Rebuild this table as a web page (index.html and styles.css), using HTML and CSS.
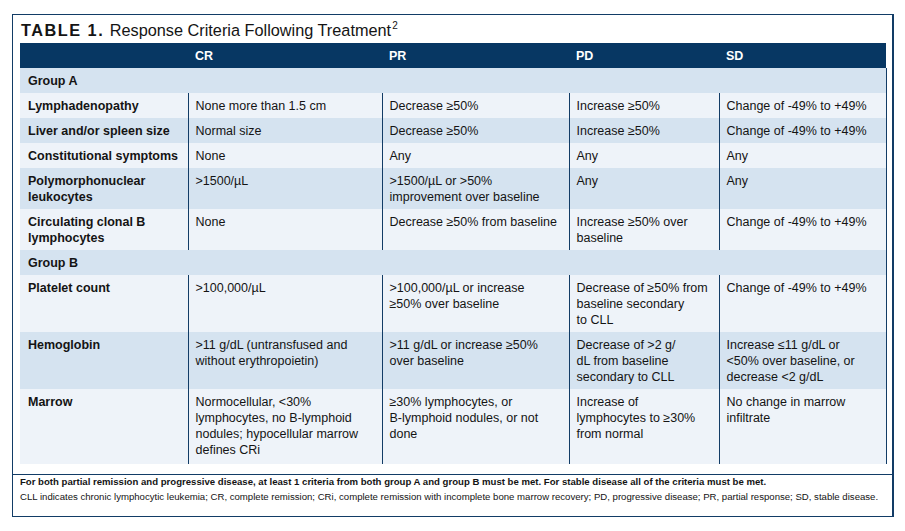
FILE: index.html
```html
<!DOCTYPE html>
<html>
<head>
<meta charset="utf-8">
<link rel="stylesheet" href="styles.css">
</head>
<body>
<div class="box">
  <h1 class="title"><span class="label">TABLE 1.</span> Response Criteria Following Treatment<sup>2</sup></h1>
  <table class="grid">
    <colgroup>
      <col class="c1"><col class="c2"><col class="c3"><col class="c4"><col class="c5">
    </colgroup>
    <thead>
      <tr><th></th><th>CR</th><th>PR</th><th>PD</th><th>SD</th></tr>
    </thead>
    <tbody>
      <tr class="group"><td colspan="5">Group A</td></tr>
      <tr class="light"><td>Lymphadenopathy</td><td>None more than 1.5 cm</td><td>Decrease ≥50%</td><td>Increase ≥50%</td><td>Change of -49% to +49%</td></tr>
      <tr class="dark"><td>Liver and/or spleen size</td><td>Normal size</td><td>Decrease ≥50%</td><td>Increase ≥50%</td><td>Change of -49% to +49%</td></tr>
      <tr class="light"><td>Constitutional symptoms</td><td>None</td><td>Any</td><td>Any</td><td>Any</td></tr>
      <tr class="dark"><td>Polymorphonuclear<br>leukocytes</td><td>&gt;1500/µL</td><td>&gt;1500/µL or &gt;50%<br>improvement over baseline</td><td>Any</td><td>Any</td></tr>
      <tr class="light"><td>Circulating clonal B<br>lymphocytes</td><td>None</td><td>Decrease ≥50% from baseline</td><td>Increase ≥50% over<br>baseline</td><td>Change of -49% to +49%</td></tr>
      <tr class="group"><td colspan="5">Group B</td></tr>
      <tr class="light"><td>Platelet count</td><td>&gt;100,000/µL</td><td>&gt;100,000/µL or increase<br>≥50% over baseline</td><td>Decrease of ≥50% from<br>baseline secondary<br>to CLL</td><td>Change of -49% to +49%</td></tr>
      <tr class="dark"><td>Hemoglobin</td><td>&gt;11 g/dL (untransfused and<br>without erythropoietin)</td><td>&gt;11 g/dL or increase ≥50%<br>over baseline</td><td>Decrease of &gt;2 g/<br>dL from baseline<br>secondary to CLL</td><td>Increase ≤11 g/dL or<br>&lt;50% over baseline, or<br>decrease &lt;2 g/dL</td></tr>
      <tr class="light tall"><td>Marrow</td><td>Normocellular, &lt;30%<br>lymphocytes, no B-lymphoid<br>nodules; hypocellular marrow<br>defines CRi</td><td>≥30% lymphocytes, or<br>B-lymphoid nodules, or not<br>done</td><td>Increase of<br>lymphocytes to ≥30%<br>from normal</td><td>No change in marrow<br>infiltrate</td></tr>
    </tbody>
  </table>
  <div class="notes">
    <p class="note-strong">For both partial remission and progressive disease, at least 1 criteria from both group A and group B must be met. For stable disease all of the criteria must be met.</p>
    <p class="note">CLL indicates chronic lymphocytic leukemia; CR, complete remission; CRi, complete remission with incomplete bone marrow recovery; PD, progressive disease; PR, partial response; SD, stable disease.</p>
  </div>
</div>
</body>
</html>
```
FILE: styles.css
```css
html, body {
  margin: 0;
  padding: 0;
  background: #ffffff;
}
body {
  font-family: "Liberation Sans", Arial, sans-serif;
  color: #141414;
}
.box {
  margin: 14px 0 0 12px;
  width: 879px;
  height: 501px;
  border: 1px solid #123c66;
  border-right-width: 2px;
  display: flex;
  flex-direction: column;
  overflow: hidden;
}
.title {
  margin: 0;
  padding: 5px 0 0 8px;
  height: 23px;
  font-size: 16.3px;
  font-weight: normal;
  line-height: 20px;
  color: #141414;
  white-space: nowrap;
}
.title .label {
  font-weight: bold;
  letter-spacing: 1.5px;
  margin-right: 1px;
}
.title sup {
  font-size: 10px;
  line-height: 0;
  vertical-align: 7px;
  margin-left: 1px;
}
.grid {
  margin-left: 7px;
  width: 866px;
  table-layout: fixed;
  border-collapse: collapse;
  font-size: 12.5px;
  line-height: 16px;
}
.c1 { width: 168px; }
.c2 { width: 194px; }
.c3 { width: 187px; }
.c4 { width: 150px; }
.c5 { width: 167px; }
.grid th {
  background: #073763;
  color: #ffffff;
  text-align: left;
  font-weight: bold;
  height: 25px;
  padding: 0 7px;
  box-sizing: border-box;
}
.grid td {
  vertical-align: top;
  padding: 5px 7px 4px 7px;
  white-space: nowrap;
  border-left: 1px solid #123c66;
}
.grid td:first-child {
  border-left: none;
  padding-left: 8px;
  font-weight: bold;
}
.grid td:last-child {
  border-right: 1px solid #123c66;
}
.grid tr.group td {
  background: #d5e3f0;
  font-weight: bold;
  border-right: 1px solid #123c66;
}
.grid tr.light td { background: #eef3f9; }
.grid tr.dark td { background: #d5e3f0; }
.grid tr.tall td { padding-bottom: 6px; }
.notes {
  margin-top: 10px;
  border-top: 1px solid #123c66;
  padding: 0 0 0 7px;
  font-size: 9.6px;
  line-height: 14.5px;
}
.notes p {
  margin: 0;
  white-space: nowrap;
}
.note-strong { font-weight: bold; }
```
